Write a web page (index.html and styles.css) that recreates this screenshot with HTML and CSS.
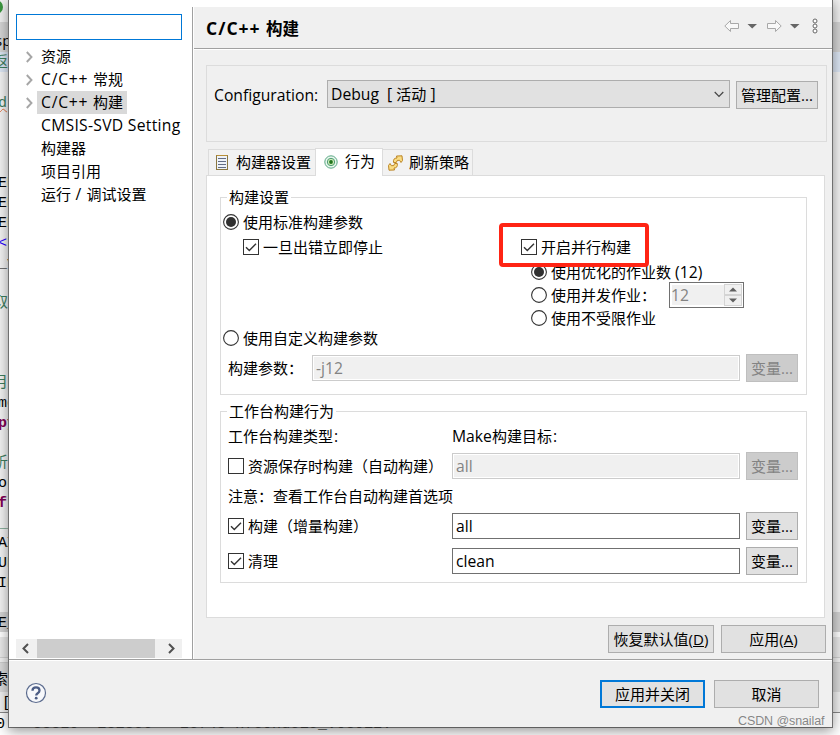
FILE: index.html
```html
<!DOCTYPE html>
<html lang="zh-CN">
<head>
<meta charset="utf-8">
<title>C/C++ 构建</title>
<link rel="stylesheet" href="styles.css">
</head>
<body>
<svg class="defs" width="0" height="0">
  <symbol id="radio" viewBox="0 0 16 16"><circle cx="8" cy="8" r="7.4" fill="#fff" stroke="#333" stroke-width="1.1"/></symbol>
  <symbol id="radio-on" viewBox="0 0 16 16"><circle cx="8" cy="8" r="7.4" fill="#fff" stroke="#333" stroke-width="1.1"/><circle cx="8" cy="8" r="5" fill="#303030"/></symbol>
  <symbol id="check" viewBox="0 0 16 16"><rect x=".5" y=".5" width="15" height="15" fill="#fff" stroke="#333"/></symbol>
  <symbol id="check-on" viewBox="0 0 16 16"><rect x=".5" y=".5" width="15" height="15" fill="#fff" stroke="#333"/><path d="M3 8.2l3.3 3.3L13 4.7" fill="none" stroke="#333" stroke-width="1.4"/></symbol>
  <symbol id="twist" viewBox="0 0 8 12"><path d="M1.3 1L6 6l-4.700 5" fill="none" stroke="#a6a6a6" stroke-width="1.9"/></symbol>
</svg>

<div class="editor">
  <div class="toolbar"><i class="run"></i></div>
  <div class="ln tab">sp</div>
  <div class="ln cur cm wide">返</div>
  <div class="ln"></div>
  <div class="ln cm squiggle">d</div>
  <div class="ln"></div><div class="ln"></div><div class="ln"></div>
  <div class="ln">EN</div><div class="ln">EN</div><div class="ln">EN</div>
  <div class="ln blue">&lt;s</div>
  <div class="ln">_v</div>
  <div class="ln"></div>
  <div class="ln cm wide">取</div>
  <div class="ln"></div><div class="ln"></div><div class="ln"></div>
  <div class="ln cm wide">月</div>
  <div class="ln">me</div>
  <div class="ln kw">py</div>
  <div class="ln"></div>
  <div class="ln cm wide">析</div>
  <div class="ln">ou</div>
  <div class="ln kw">f</div>
  <div class="ln cm">__</div>
  <div class="ln">AX</div><div class="ln">UN</div><div class="ln">IN</div>
  <div class="ln"></div>
  <div class="ln hit">E_</div>
  <div class="gap"></div>
  <div class="ln views wide">索</div>
  <div class="ln con">[</div>
  <div class="ln out">0 &nbsp; 33320 &nbsp;131356 &nbsp; 2ef48 H750nd515_v03012.</div>
</div>

<main class="dialog">
  <div class="upper">
    <aside class="side">
      <div class="search"></div>
      <div class="tree">
        <div class="node"><svg class="tw"><use href="#twist"/></svg><span>资源</span></div>
        <div class="node"><svg class="tw"><use href="#twist"/></svg><span class="l1"><em>C/C++ </em>常规</span></div>
        <div class="node"><svg class="tw"><use href="#twist"/></svg><span class="sel l1"><em>C/C++ </em>构建</span></div>
        <div class="node leaf"><span class="l2">CMSIS-SVD Setting</span></div>
        <div class="node leaf"><span>构建器</span></div>
        <div class="node leaf"><span>项目引用</span></div>
        <div class="node leaf"><span class="l3">运行<em> / </em>调试设置</span></div>
      </div>
      <div class="hscroll">
        <svg width="21" height="19" viewBox="0 0 21 19"><path d="M12 5L7.500 9.500l4.500 4.500" fill="none" stroke="#505050" stroke-width="2"/></svg>
        <div class="thumb"></div>
        <svg width="21" height="19" viewBox="0 0 21 19"><path d="M9 5l4.500 4.500L9 14" fill="none" stroke="#505050" stroke-width="2"/></svg>
      </div>
    </aside>

    <section class="page">
      <header class="head">
        <h1><em>C/C++ </em>构建</h1>
        <svg width="96" height="16" viewBox="0 0 96 16">
          <g fill="#f8f8f8" stroke="#a8a8a8"><path d="M.8 8L6.500 2.500v3h8v5h-8v3z"/><path d="M57.200 8L51.500 2.500v3h-8v5h8v3z"/></g>
          <path d="M23.500 6h9.500L28.200 10.600zM66 6h9.500L70.700 10.600z" fill="#666"/>
          <g fill="#fff" stroke="#666"><circle cx="91" cy="3" r="2"/><circle cx="91" cy="8" r="2"/><circle cx="91" cy="13" r="2"/></g>
        </svg>
      </header>

      <div class="config">
        <label class="cl">Configuration:</label>
        <div class="combo"><span><em>Debug&nbsp; [ </em>活动<em> ]</em></span><svg width="10" height="7" viewBox="0 0 10 7"><path d="M.7 1L5 5.300 9.300 1" fill="none" stroke="#444" stroke-width="1.200"/></svg></div>
        <button class="btn manage">管理配置...</button>
      </div>

      <nav class="tabs">
        <div class="tab t1"><svg width="12" height="15" viewBox="0 0 12 15"><rect x=".5" y=".5" width="11" height="14" fill="#eef2f8" stroke="#8b7740"/><path d="M.5.5h11" stroke="#b88f37"/><path d="M2 3.500h8M2 6.500h8M2 9.500h8M2 12.500h8" stroke="#626d85"/></svg>构建器设置</div>
        <div class="tab t2"><svg width="14" height="14" viewBox="0 0 14 14"><circle cx="7" cy="7" r="6.200" fill="#eaf7f0" stroke="#59a783"/><circle cx="7" cy="7" r="3.700" fill="#cdebb9" stroke="#4f9d74"/><circle cx="7" cy="7" r="1.900" fill="#20751d"/></svg>行为</div>
        <div class="tab t3"><svg width="15" height="16" viewBox="0 0 15 16"><g fill="#f9dc83" stroke="#b67a16" stroke-width=".9"><path d="M5.500 7.500Q4.800 3 9 3L8.500 1 14 .8 14.500 5.500 13 7.500 11.600 5.300Q8.500 4.500 8.300 7.500z"/><path d="M9.300 8.500Q10 13 6 13L6.500 15 1 15.200.5 10.500 2 8.500 3.400 10.700Q6.500 11.500 6.700 8.500z"/></g></svg>刷新策略</div>
      </nav>

      <div class="panel">
        <section class="group g1">
          <h2>构建设置</h2>
          <div class="cols">
            <div class="lcol">
              <div class="opt"><svg><use href="#radio-on"/></svg>使用标准构建参数</div>
              <div class="opt sub"><svg><use href="#check-on"/></svg>一旦出错立即停止</div>
            </div>
            <div class="rcol">
              <div class="opt par"><svg><use href="#check-on"/></svg>开启并行构建<i class="mark"></i></div>
              <div class="opt job"><svg><use href="#radio-on"/></svg><span>使用优化的作业数<em> (12)</em></span></div>
              <div class="opt job"><svg><use href="#radio"/></svg>使用并发作业：
                <div class="spin"><span>12</span><div class="arrows"><b><svg viewBox="0 0 8 5"><path d="M0 4.500L4 .5l4 4z"/></svg></b><b><svg viewBox="0 0 8 5"><path d="M0 .5h8l-4 4z"/></svg></b></div></div>
              </div>
              <div class="opt job"><svg><use href="#radio"/></svg>使用不受限作业</div>
            </div>
          </div>
          <div class="opt"><svg><use href="#radio"/></svg>使用自定义构建参数</div>
          <div class="row args"><label>构建参数：</label><div class="field off">-j12</div><button class="btn off">变量...</button></div>
        </section>

        <section class="group g2">
          <h2>工作台构建行为</h2>
          <div class="row types"><label>工作台构建类型<em> :</em></label><span><em>Make</em>构建目标<em> :</em></span></div>
          <div class="row r1"><label class="opt"><svg><use href="#check"/></svg>资源保存时构建（自动构建）</label><div class="field off">all</div><button class="btn off">变量...</button></div>
          <div class="row note">注意：查看工作台自动构建首选项</div>
          <div class="row r2"><label class="opt"><svg><use href="#check-on"/></svg>构建（增量构建）</label><div class="field">all</div><button class="btn">变量...</button></div>
          <div class="row r3"><label class="opt"><svg><use href="#check-on"/></svg>清理</label><div class="field">clean</div><button class="btn">变量...</button></div>
        </section>
      </div>

      <div class="apply">
        <button class="btn d">恢复默认值(<u>D</u>)</button>
        <button class="btn a">应用(<u>A</u>)</button>
      </div>
    </section>
  </div>

  <footer class="foot">
    <svg width="22" height="22" viewBox="0 0 22 22"><circle cx="11" cy="11" r="9.500" fill="#f7f8fb" stroke="#5b6b8e" stroke-width="1.200"/><path d="M7.500 8.800Q7.500 5.300 11 5.300t3.500 3.200Q14.500 10 12.700 11.200 11.200 12.200 11.200 13.500" fill="none" stroke="#4c5d85" stroke-width="2.300"/><circle cx="11.200" cy="16.200" r="1.400" fill="#4c5d85"/></svg>
    <button class="btn primary">应用并关闭</button>
    <button class="btn">取消</button>
  </footer>
</main>
<div class="credit">CSDN @snailaf</div>
</body>
</html>
```

FILE: styles.css
```css
* { box-sizing: border-box; }
body {
  margin: 0; width: 840px; height: 735px; overflow: hidden; position: relative;
  background: #f3f3f3; color: #000;
  font: 15px/20px "Open Sans", "Noto Sans CJK SC", sans-serif;
}
.defs { position: absolute; }
svg { flex: none; display: block; }
h1, h2 { margin: 0; font-size: 15px; font-weight: 400; }
em { font-style: normal; white-space: pre; font-size: 15.7px; line-height: 1; }

/* editor window behind the dialog */
.editor { width: 840px; height: 735px; overflow: hidden; font: 15px/24px "Liberation Mono", "Noto Sans CJK SC", monospace; }
.toolbar { height: 32px; background: linear-gradient(#f0f0f0 22px, #d5d5d5 22px); }
.run { display: block; width: 14px; height: 14px; border-radius: 50%; background: #3c963f; margin-left: -11px; }
.ln { height: 20px; white-space: pre; text-indent: -2px; }
.wide { text-indent: -7px; }
.tab { background: #d5d5d5; text-indent: -5px; font-family: "Open Sans", sans-serif; }
.editor .tab { height: 20px; line-height: 16px; }
.cur { background: #dce6f4; }
.cm { color: #3f7f5f; }
.squiggle { text-decoration: underline wavy #e07040 1px; }
.blue { color: #2a00ff; }
.kw { color: #7f0055; font-weight: 700; }
.hit { background: #d4d4d4; }
.gap { height: 37px; background: linear-gradient(#fff 5px, #e9e9e9 5px 25px, #d0d0d0 25px 26px, #f0f0f0 26px 30px, #ccc 30px 31px, #dadada 31px); }
.views { background: #dadada; height: 23px; }
.con { background: #f0f0f0; height: 21px; border-bottom: 1px solid #888; text-indent: 2px; }
.out { background: #fff; height: 22px; line-height: 23px; text-indent: -4px; letter-spacing: .2px; }

/* dialog */
.dialog {
  position: absolute; left: 8px; top: -1px; width: 825px; height: 729px;
  border: 1px solid #707070; border-bottom-color: rgba(60,60,60,.7); background: #fff; background-clip: padding-box;
  box-shadow: 0 3px 12px rgba(0,0,0,.42);
}
.upper { height: 660px; display: flex; border-bottom: 1px solid #a0a0a0; }
.side { width: 184px; padding: 14px 11px 0 7px; display: flex; flex-direction: column; background: linear-gradient(#a0a0a0, #a0a0a0) 183px 7px / 1px 653px no-repeat; }
.search { height: 26px; border: 1px solid #0078d7; flex: none; }
.tree { margin-top: 5px; height: 594px; overflow: hidden; }
.node { height: 23px; display: flex; align-items: center; padding-left: 9px; white-space: nowrap; }
.node span { height: 23px; line-height: 22px; margin-left: 3px; padding: 0 4px; }
.node.leaf span { margin-left: 12px; }
.l1 em { letter-spacing: .75px; }
.node .l2 { font-size: 15.7px; letter-spacing: .28px; }
.l3 em { letter-spacing: .5px; }
.tw { width: 9px; height: 12px; }
.sel { background: #d9d9d9; }
.hscroll { display: flex; height: 19px; flex: none; background: #f0f0f0; }
.thumb { width: 118px; background: #cdcdcd; margin-right: 5px; }

.page { margin: 7px 0 0 1px; width: 638px; background: #f0f0f0; padding-top: 1px; }
.head { height: 41px; border-bottom: 1px solid #a0a0a0; box-shadow: 0 1px #fff; display: flex; justify-content: space-between; padding: 10px 12px 0 12px; }
.head h1 { font-size: 16.5px; font-weight: 700; line-height: 22px; }
.head h1 em { font-size: 17.5px; letter-spacing: 1px; }
.config { margin: 16px 5px 0 12px; height: 77px; border: 1px solid #dcdcdc; display: flex; padding: 14px 0 0 7px; }
.config label { width: 113px; line-height: 31px; font-size: 15.7px; }
.combo { width: 403px; height: 28px; border: 1px solid #adadad; background: #e1e1e1; display: flex; justify-content: space-between; align-items: center; padding: 0 5px 0 3px; }
.btn { height: 28px; border: 1px solid #adadad; background: #e1e1e1; padding: 0; font: inherit; color: #000; white-space: nowrap; flex: none; }
.manage { width: 82px; margin: 1px 0 0 6px; }
.tabs { display: flex; align-items: flex-end; height: 28px; margin: 6px 0 -1px 14px; position: relative; }
.tabs .tab { height: 26px; border: 1px solid #dcdcdc; border-bottom: 0; background: #f2f2f2; font: inherit; line-height: 25px; text-indent: 0; display: flex; align-items: center; white-space: nowrap; margin-bottom: 1px; }
.tabs .t1 { width: 107px; border-right: 0; padding-left: 7px; gap: 8px; }
.tabs .t2 { width: 68px; height: 28px; background: #fff; margin: 0; padding: 0 0 2px 8px; gap: 7px; }
.tabs .t3 { width: 90px; border-left: 0; padding-left: 5px; gap: 6px; }
.panel { margin: 0 7px 0 12px; height: 443px; background: #fff; border: 1px solid #dcdcdc; padding: 21px 0 0 13px; }
.group { width: 587px; border: 1px solid #dcdcdc; padding: 0 7px; }
.group h2 { width: max-content; height: 20px; line-height: 20px; margin-top: -11px; background: #fff; padding: 0 2px; margin-left: -1px; }
.g1 { height: 198px; }
.g2 { height: 172px; margin-top: 16px; }
.cols { display: flex; height: 116px; margin-top: 3px; }
.lcol { width: 300px; flex: none; }
.opt { display: flex; align-items: center; height: 24px; white-space: nowrap; gap: 4px; }
.opt > svg { width: 16px; height: 16px; }
.g1 .opt { margin-left: -5px; }
.g1 .sub { margin: 1px 0 0 15px; }
.rcol { padding-top: 25px; }
.g1 .par { margin: 0 0 2px -7px; position: relative; }
.g1 .job { height: 22px; margin: 1px 0 0 3px; }
.mark { position: absolute; z-index: 2; left: -22px; top: -12px; width: 150px; height: 44px; border: 4px solid #ff2414; border-radius: 4px; }
.spin { width: 75px; height: 26px; border: 1px solid #707070; background: #f0f0f0; color: #838383; margin-left: 9px; display: flex; justify-content: space-between; box-shadow: inset 0 0 0 2px #fff; padding: 1px; }
.spin span { line-height: 22px; font-size: 15.7px; }
.arrows { width: 18px; display: flex; flex-direction: column; }
.arrows b { flex: 1; border: 1px solid #d4d4d4; display: grid; place-items: center; }
.arrows svg { width: 8px; height: 5px; fill: #606060; }
.row { display: flex; align-items: center; height: 28px; white-space: nowrap; margin-right: 1px; }
.row label { width: 224px; flex: none; }
.args { margin-top: 4px; }
.row.args label { width: 84px; }
.field { flex: 1; height: 26px; border: 1px solid #707070; background: #fff; padding: 0 3px; line-height: 25px; font-size: 15.7px; }
.field.off { border-color: #ccc; background: #f0f0f0; box-shadow: inset 0 0 0 1px #fff; color: #838383; }
.row .btn { width: 52px; margin-left: 6px; }
.btn.off { background: #ccc; border-color: #bfbfbf; color: #838383; }
.types { height: 22px; margin-top: 4px; }
.types em { word-spacing: -3px; }
.r1 { margin-top: 5px; }
.note { height: 22px; margin-top: 5px; }
.r2 { margin-top: 5px; }
.r3 { margin-top: 7px; }
.apply { display: flex; justify-content: flex-end; gap: 7px; padding: 7px 6px 0 0; }
.apply .d { width: 106px; }
.apply .a { width: 105px; }
.foot { height: 67px; border-top: 1px solid #fff; background: #f0f0f0; display: flex; padding: 19px 13px 0 16px; }
.foot svg { margin: 2px auto 0 0; }
.foot .btn { width: 105px; margin-left: 9px; }
.foot .primary { border: 2px solid #0078d7; }
.credit { position: absolute; left: 738px; top: 712px; font: 12.500px/18px "Liberation Sans", sans-serif; letter-spacing: -.1px; color: #858585; text-shadow: 0 0 1px #fff; white-space: nowrap; }
```
